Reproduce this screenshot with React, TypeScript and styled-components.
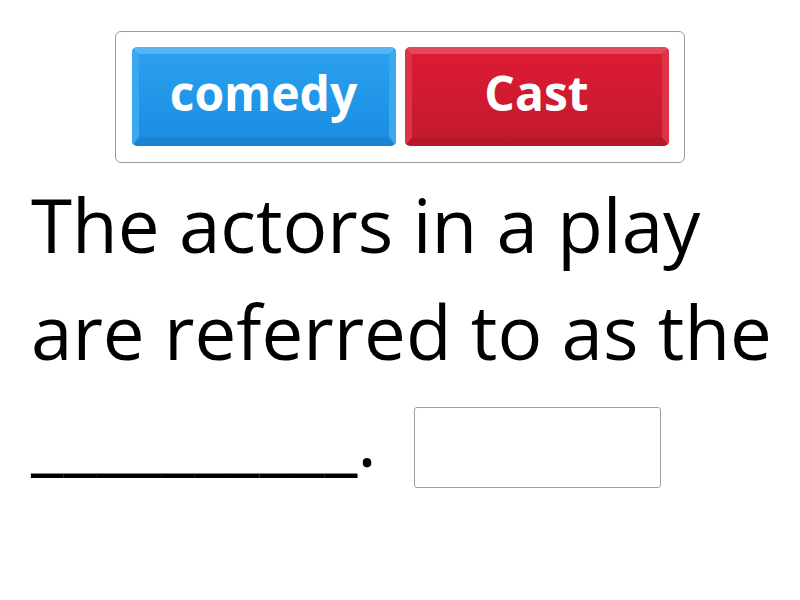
import React from "react";
import styled, { createGlobalStyle } from "styled-components";

const Global = createGlobalStyle`
  html, body {
    margin: 0;
    padding: 0;
    background: #ffffff;
  }
  body {
    font-family: "Open Sans", "Noto Sans", sans-serif;
    color: #000;
  }
`;

const Page = styled.div`
  width: 800px;
  height: 600px;
  display: flex;
  flex-direction: column;
  align-items: center;
  padding-top: 31px;
  box-sizing: border-box;
`;

const Tray = styled.div`
  display: flex;
  gap: 9px;
  padding: 15px 15px 16px 16px;
  margin-right: 1px;
  border: 1px solid #9a9a9a;
  border-radius: 6px;
  box-sizing: border-box;
`;

const Tile = styled.div<{ $tone: "blue" | "red" }>`
  width: 264px;
  height: 99px;
  box-sizing: border-box;
  display: flex;
  align-items: center;
  justify-content: center;
  border-radius: 5px;
  font-family: "Open Sans", sans-serif;
  font-weight: 700;
  font-size: 48px;
  color: #ffffff;
  padding-bottom: 6px;
  background: ${(p) =>
    p.$tone === "blue"
      ? "linear-gradient(#2ba0ef, #1a8fe3)"
      : "linear-gradient(#dc1b33, #c41a2e)"};
  border-style: solid;
  border-width: 7px 7px 9px 7px;
  border-top-color: ${(p) => (p.$tone === "blue" ? "#56b5f2" : "#e24a5c")};
  border-left-color: ${(p) => (p.$tone === "blue" ? "#3aa7ef" : "#dd3346")};
  border-right-color: ${(p) => (p.$tone === "blue" ? "#3aa7ef" : "#dd3346")};
  border-bottom-color: ${(p) => (p.$tone === "blue" ? "#1b84d2" : "#b5182a")};
`;

const Sentence = styled.div`
  align-self: stretch;
  padding: 8px 12px 0 31px;
  font-family: "Open Sans", sans-serif;
  font-size: 74.5px;
  line-height: 107px;
  color: #000;
`;

const Slot = styled.span`
  display: inline-block;
  vertical-align: middle;
  width: 247px;
  height: 81px;
  margin-left: 37px;
  box-sizing: border-box;
  border: 1px solid #a0a0a0;
  border-radius: 3px;
  background: #fff;
`;

export default function App() {
  return (
    <>
      <Global />
      <Page>
        <Tray>
          <Tile $tone="blue">comedy</Tile>
          <Tile $tone="red">Cast</Tile>
        </Tray>
        <Sentence>
          The actors in a play are referred to as the __________.
          <Slot />
        </Sentence>
      </Page>
    </>
  );
}
